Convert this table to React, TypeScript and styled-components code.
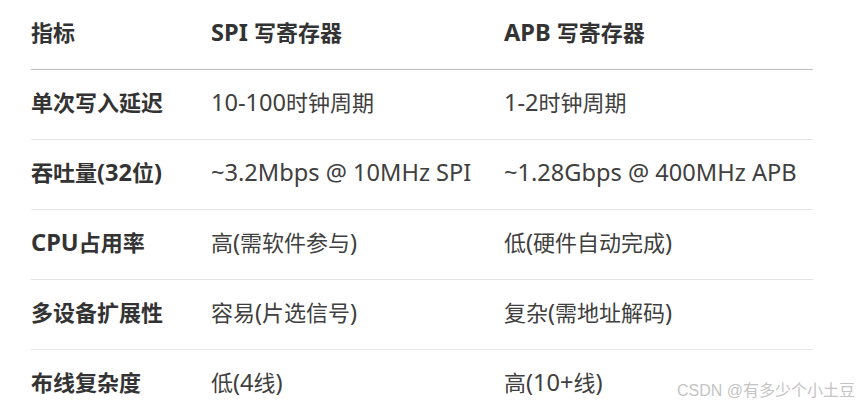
import React from "react";
import styled, { createGlobalStyle } from "styled-components";

const GlobalStyle = createGlobalStyle`
  html, body {
    margin: 0;
    padding: 0;
    background: #fff;
  }
  body {
    font-family: "Noto Sans", "Noto Sans CJK SC", sans-serif;
    color: #404040;
  }
`;

const Page = styled.div`
  position: relative;
  width: 864px;
  height: 408px;
  overflow: hidden;
  padding: 0 51px 0 31px;
  box-sizing: border-box;
`;

const Table = styled.div`
  display: flex;
  flex-direction: column;
`;

const Row = styled.div<{ head?: boolean }>`
  display: grid;
  grid-template-columns: 180px 293px 1fr;
  align-items: center;
  height: 70px;
  padding-bottom: 5px;
  box-sizing: border-box;
  border-bottom: 1px solid ${(p) => (p.head ? "#bdbdbd" : "#e4e4e4")};
  font-size: 22px;
`;

const Cell = styled.div<{ bold?: boolean }>`
  font-weight: ${(p) => (p.bold ? 700 : 400)};
  color: ${(p) => (p.bold ? "#333" : "#404040")};
  white-space: nowrap;
  line-height: 30px;
`;

const Latin = styled.span`
  font-size: 23.6px;
`;

const Watermark = styled.div`
  position: absolute;
  right: 9px;
  bottom: 7px;
  font-size: 16px;
  color: #c4c4c4;
  font-family: "Liberation Sans", "Noto Sans CJK SC", sans-serif;
`;

const Mixed: React.FC<{ text: string }> = ({ text }) => (
  <>
    {text.split(/([\u3400-\u9fff]+)/).map((part, i) =>
      /[\u3400-\u9fff]/.test(part) ? part : part && <Latin key={i}>{part}</Latin>
    )}
  </>
);

const rows = [
  ["单次写入延迟", "10-100时钟周期", "1-2时钟周期"],
  ["吞吐量(32位)", "~3.2Mbps @ 10MHz SPI", "~1.28Gbps @ 400MHz APB"],
  ["CPU占用率", "高(需软件参与)", "低(硬件自动完成)"],
  ["多设备扩展性", "容易(片选信号)", "复杂(需地址解码)"],
  ["布线复杂度", "低(4线)", "高(10+线)"],
];

const App: React.FC = () => (
  <>
    <GlobalStyle />
    <Page>
      <Table>
        <Row head>
          <Cell bold>指标</Cell>
          <Cell bold><Mixed text="SPI 写寄存器" /></Cell>
          <Cell bold><Mixed text="APB 写寄存器" /></Cell>
        </Row>
        {rows.map((r) => (
          <Row key={r[0]}>
            <Cell bold><Mixed text={r[0]} /></Cell>
            <Cell><Mixed text={r[1]} /></Cell>
            <Cell><Mixed text={r[2]} /></Cell>
          </Row>
        ))}
      </Table>
      <Watermark>CSDN @有多少个小土豆</Watermark>
    </Page>
  </>
);

export default App;
